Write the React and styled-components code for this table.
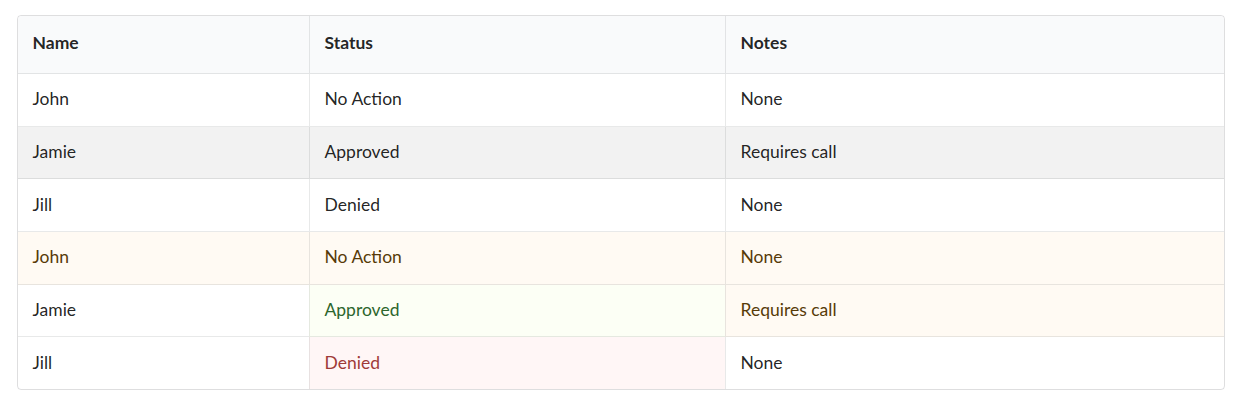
import React from "react";
import styled, { createGlobalStyle } from "styled-components";

const GlobalStyle = createGlobalStyle`
    body {
        margin: 0;
        background: #FFFFFF;
        font-family: Lato, "Helvetica Neue", Arial, sans-serif;
        font-size: 17.5px;
    }
`;

const Page = styled.div`
    padding: 15px 8px 0 17px;
`;

const Table = styled.table`
    width: 1208px;
    table-layout: fixed;
    border-collapse: separate;
    border-spacing: 0;
    border: 1px solid rgba(34, 36, 38, 0.15);
    border-radius: 4px;
    color: rgba(0, 0, 0, 0.87);
    font-size: 17.5px;
    line-height: 25px;
`;

const HeadCell = styled.th`
    text-align: left;
    font-weight: 700;
    background: #F9FAFB;
    padding: 14px 14.5px 18px;
    border-bottom: 1px solid rgba(34, 36, 38, 0.1);
    border-left: ${p => (p.$first ? "none" : "1px solid rgba(34, 36, 38, 0.1)")};
    &:first-child { border-top-left-radius: 4px; }
    &:last-child { border-top-right-radius: 4px; }
`;

const tones = {
    active: { bg: "#F2F2F2", fg: "rgba(0, 0, 0, 0.87)" },
    warning: { bg: "#FFFAF3", fg: "#573A08" },
    positive: { bg: "#FCFFF5", fg: "#2C662D" },
    negative: { bg: "#FFF6F6", fg: "#9F3A38" },
};

const Row = styled.tr`
    background: ${p => (p.$tone ? tones[p.$tone].bg : "transparent")};
    color: ${p => (p.$tone ? tones[p.$tone].fg : "inherit")};
    &:not(:last-child) > td {
        border-bottom: 1px solid rgba(34, 36, 38, 0.1);
    }
`;

const Cell = styled.td`
    padding: 12.33px 14.5px 14.33px;
    background: ${p => (p.$tone ? tones[p.$tone].bg : "transparent")};
    color: ${p => (p.$tone ? tones[p.$tone].fg : "inherit")};
    border-left: ${p => (p.$first ? "none" : "1px solid rgba(34, 36, 38, 0.1)")};
`;

const rows = [
    { tone: null, cells: [["John"], ["No Action"], ["None"]] },
    { tone: "active", cells: [["Jamie"], ["Approved"], ["Requires call"]] },
    { tone: null, cells: [["Jill"], ["Denied"], ["None"]] },
    { tone: "warning", cells: [["John"], ["No Action"], ["None"]] },
    { tone: null, cells: [["Jamie"], ["Approved", "positive"], ["Requires call", "warning"]] },
    { tone: null, cells: [["Jill"], ["Denied", "negative"], ["None"]] },
];

const App = () => {
    return (
        <>
            <GlobalStyle />
            <Page>
                <Table>
                    <colgroup>
                        <col style={{ width: 291 }} />
                        <col style={{ width: 416 }} />
                        <col />
                    </colgroup>
                    <thead>
                        <tr>
                            <HeadCell $first>Name</HeadCell>
                            <HeadCell>Status</HeadCell>
                            <HeadCell>Notes</HeadCell>
                        </tr>
                    </thead>
                    <tbody>
                        {rows.map((row, i) => (
                            <Row key={i} $tone={row.tone}>
                                {row.cells.map(([text, tone], j) => (
                                    <Cell key={j} $first={j === 0} $tone={tone}>
                                        {text}
                                    </Cell>
                                ))}
                            </Row>
                        ))}
                    </tbody>
                </Table>
            </Page>
        </>
    );
};

export default App;
